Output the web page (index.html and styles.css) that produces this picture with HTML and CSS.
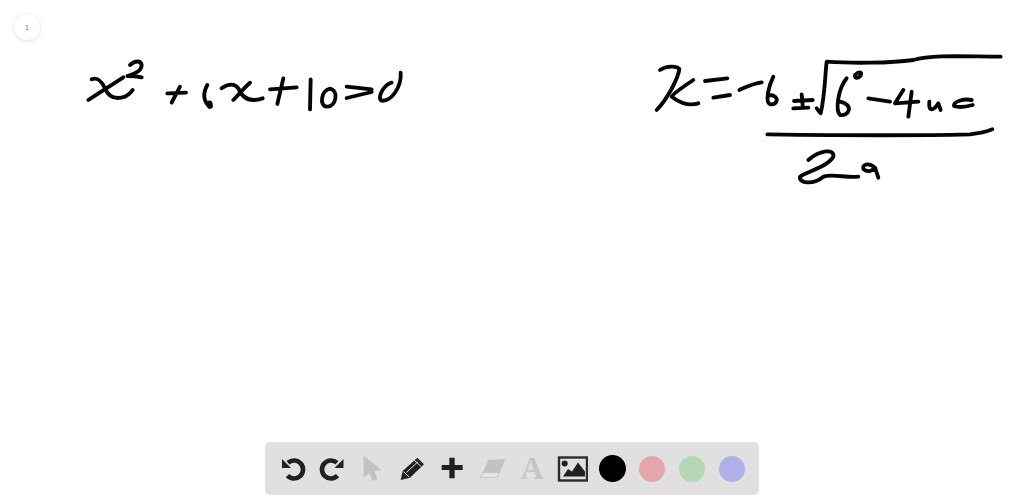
FILE: index.html
```html
<!DOCTYPE html>
<html lang="en">
<head>
<meta charset="utf-8">
<title>Whiteboard</title>
<link rel="stylesheet" href="styles.css">
</head>
<body>
<main class="board">
  <div class="page-badge">1</div>
  <svg class="ink" viewBox="0 0 1024 502" aria-hidden="true">
    <g transform="translate(70 50) scale(.33333)">
      <path d="M65 88C80 82 92 88 105 115C115 140 135 150 165 140C175 135 183 128 188 120"/>
      <path d="M55 150C85 130 125 105 160 82"/>
      <path d="M180 45C195 32 212 30 215 45C215 60 195 72 172 78C190 78 205 80 215 82"/>
      <path d="M292 130L348 128M330 110L305 158"/>
      <path d="M412 105C398 130 398 150 418 170"/>
      <path class="blob" d="M419 160L420 168"/>
      <path d="M455 115C475 100 495 100 505 115C515 140 535 160 578 145M490 150C510 130 525 110 540 98"/>
      <path d="M600 118L680 112M640 85L622 162"/>
      <path d="M722 88L720 178"/>
      <path d="M780 116C752 122 748 168 770 170C798 172 808 122 780 116"/>
      <path d="M830 110L905 118M830 144L905 126"/>
      <path d="M965 98C940 105 920 145 935 152C965 155 995 110 992 68"/>
    </g>
    <g transform="translate(650 45) scale(.33333)">
      <path d="M30 75C50 62 80 62 88 72C85 100 50 165 20 195"/>
      <path d="M130 105C100 125 70 145 65 155C85 170 110 185 145 175"/>
      <path d="M165 108L232 100M190 158L240 150"/>
      <path d="M268 135C290 125 310 115 335 112"/>
      <path d="M370 95C355 125 345 170 360 178C385 182 390 150 358 150"/>
      <path d="M432 168L488 165M455 148L458 182M430 190L475 188"/>
      <path d="M500 190L512 205C525 150 525 90 530 50C600 55 720 55 790 45C850 28 950 35 1052 35"/>
      <path d="M590 100C565 130 555 195 570 210C595 215 615 180 570 170"/>
      <path d="M615 90C625 80 638 78 632 92C625 102 612 100 615 90"/>
      <path d="M655 160L720 170"/>
      <path d="M760 135L735 175L805 170M785 140L775 215"/>
      <path d="M838 170C835 200 850 200 865 175L872 195"/>
      <path d="M965 165C940 160 910 170 912 183C930 190 950 185 968 180"/>
      <path d="M352 268C500 270 800 272 960 268C990 265 1010 260 1027 253"/>
      <path d="M475 345C510 315 555 310 550 335C535 365 470 380 450 395C445 415 490 420 520 395C550 385 590 400 625 395"/>
      <path d="M675 368C655 350 635 360 640 372C655 385 670 375 675 368L685 398"/>
    </g>
  </svg>

  <div class="toolbar">
    <span class="tool"><svg class="glyph" viewBox="277 454.500 28 28"><path class="ring" d="M287 462.300A9 9 0 1 1 286.500 475.200"/><path class="dark" d="M281 458.500V467.500H290Z"/></svg></span>
    <span class="tool"><svg class="glyph" viewBox="317.500 454.500 28 28"><path class="ring" d="M336.500 462.300A9 9 0 1 0 337 475.200"/><path class="dark" d="M343 458.500V467.500H334Z"/></svg></span>
    <span class="tool"><svg class="glyph" viewBox="291 60 84 84"><path class="muted" d="M308 62L362 105L340 108L350 132L335 138L325 115L308 130Z"/></svg></span>
    <span class="tool"><svg class="glyph" viewBox="414 60 84 84"><path class="dark" d="M422 135L428 108L472 68L492 88L450 128Z"/><path class="cut" d="M430 110L448 126M440 112L474 80M463 76L483 94"/></svg></span>
    <span class="tool"><svg class="glyph" viewBox="534 60 84 84"><path class="dark" d="M568 68H584V90H608V105H584V130H568V105H545V90H568Z"/></svg></span>
    <span class="tool"><svg class="glyph" viewBox="654 60 84 84"><path class="muted" d="M685 75L738 72L718 113H668Z"/><path class="eraser-tip" d="M668 113H718L711 127H660Z"/></svg></span>
    <span class="tool tool-text">A</span>
    <span class="tool"><svg class="picture" viewBox="556 455.500 32 27"><rect class="frame" x="559" y="458" width="28" height="23"/><circle class="dark" cx="564.700" cy="464" r="3"/><path class="dark" d="M563 477L568 469.500L572 472L578 463L585 472V477Z"/></svg></span>
    <span class="tool"><span class="dot dot-black"></span></span>
    <span class="tool"><span class="dot dot-red"></span></span>
    <span class="tool"><span class="dot dot-green"></span></span>
    <span class="tool"><span class="dot dot-blue"></span></span>
  </div>
</main>
</body>
</html>
```
FILE: styles.css
```css
* { box-sizing: border-box; }
html, body { margin: 0; height: 100%; background: #fff; overflow: hidden; }

.board {
  position: relative;
  height: 502px;
  display: flex;
  flex-direction: column;
  justify-content: flex-end;
  align-items: center;
  padding-bottom: 7px;
}

.ink {
  position: absolute;
  inset: 0;
  width: 100%;
  height: 100%;
}
.ink path {
  fill: none;
  stroke: #050505;
  stroke-width: 11.500;
  stroke-linecap: round;
  stroke-linejoin: round;
}
.ink .blob { stroke-width: 17; }

.page-badge {
  position: absolute;
  left: 14px;
  top: 14px;
  width: 26px;
  height: 26px;
  border-radius: 50%;
  background: #fff;
  box-shadow: 0 1px 4px rgba(0, 0, 0, .13);
  display: flex;
  align-items: center;
  justify-content: center;
  font: 8px "Liberation Sans", sans-serif;
  color: #777;
}

.toolbar {
  position: relative;
  width: 494px;
  height: 53px;
  padding: 0 7px;
  display: flex;
  align-items: center;
  background: #e0e0e0;
  border-radius: 5px;
}

.tool {
  flex: 0 0 40px;
  height: 40px;
  display: flex;
  align-items: center;
  justify-content: center;
}

.glyph { width: 28px; height: 28px; }
.picture { width: 32px; height: 27px; }

.dark { fill: #212121; }
.ring { fill: none; stroke: #212121; stroke-width: 4.600; }
.muted { fill: #c2c2c2; }
.cut { fill: none; stroke: #e0e0e0; stroke-width: 3; }
.eraser-tip { fill: #e6e6e6; stroke: #c2c2c2; stroke-width: 3; }
.frame { fill: none; stroke: #2a2a2a; stroke-width: 2.400; }

.tool-text {
  font: 700 32px "Liberation Serif", serif;
  color: #c6c6c6;
}

.dot { width: 26px; height: 26px; border-radius: 50%; }
.dot-black { background: #000; width: 27px; height: 27px; }
.dot-red { background: #e4a6aa; }
.dot-green { background: #b4d6b4; }
.dot-blue { background: #b0b0e6; }
```
